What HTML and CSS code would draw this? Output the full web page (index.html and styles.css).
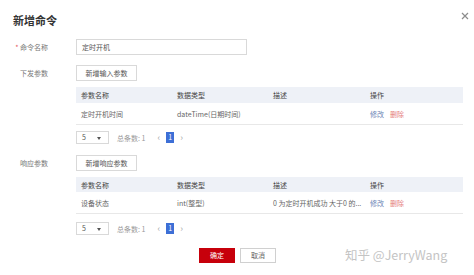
FILE: index.html
```html
<!DOCTYPE html>
<html lang="zh">
<head>
<meta charset="utf-8">
<title>新增命令</title>
<link rel="stylesheet" href="styles.css">
</head>
<body>
<div class="dialog">
  <div class="head">
    <div class="title">新增命令</div>
    <svg class="close" width="8" height="8" viewBox="0 0 8 8"><path d="M1 1L7 7M7 1L1 7" stroke="#8c8c8c" stroke-width="1.2"/></svg>
  </div>

  <div class="row r-name">
    <div class="label"><span class="req">*</span> 命令名称</div>
    <div class="input">定时开机</div>
  </div>

  <div class="row r-btn1">
    <div class="label">下发参数</div>
    <div class="btn">新增输入参数</div>
  </div>
  <div class="block">
    <div class="table">
      <div class="tr th"><div class="c1">参数名称</div><div class="c2">数据类型</div><div class="c3">描述</div><div class="c4">操作</div></div>
      <div class="tr td td1"><div class="c1">定时开机时间</div><div class="c2">dateTime(日期时间)</div><div class="c3"></div><div class="c4"><span class="edit">修改</span><span class="del">删除</span></div></div>
    </div>
    <div class="pager">
      <div class="select">5<span class="arrow"></span></div>
      <span class="total">总条数: 1</span>
      <span class="nav">&lsaquo;</span>
      <span class="page">1</span>
      <span class="nav">&rsaquo;</span>
    </div>
  </div>

  <div class="row r-btn2">
    <div class="label">响应参数</div>
    <div class="btn">新增响应参数</div>
  </div>
  <div class="block">
    <div class="table">
      <div class="tr th th2"><div class="c1">参数名称</div><div class="c2">数据类型</div><div class="c3">描述</div><div class="c4">操作</div></div>
      <div class="tr td td2"><div class="c1">设备状态</div><div class="c2">int(整型)</div><div class="c3">0 为定时开机成功 大于0 的...</div><div class="c4"><span class="edit">修改</span><span class="del">删除</span></div></div>
    </div>
    <div class="pager pager2">
      <div class="select">5<span class="arrow"></span></div>
      <span class="total">总条数: 1</span>
      <span class="nav">&lsaquo;</span>
      <span class="page">1</span>
      <span class="nav">&rsaquo;</span>
    </div>
  </div>

  <div class="footer">
    <div class="ok">确定</div>
    <div class="cancel">取消</div>
  </div>
</div>
<div class="watermark">知乎 @JerryWang</div>
</body>
</html>
```

FILE: styles.css
```css
html, body {
  margin: 0;
  padding: 0;
  background: #fff;
}
body {
  width: 474px;
  height: 275px;
  position: relative;
  overflow: hidden;
  font-family: "Noto Sans CJK SC", "Noto Sans", sans-serif;
  color: #666;
  font-size: 7px;
}
.dialog {
  display: flex;
  flex-direction: column;
}
.head {
  display: flex;
  justify-content: space-between;
  align-items: flex-start;
  padding: 12px 5px 0 13px;
}
.title {
  font-size: 11px;
  line-height: 16px;
  font-weight: bold;
  color: #333;
}
.close {
  margin-top: 0;
}
.row {
  display: flex;
  align-items: center;
}
.label {
  width: 48px;
  margin-right: 28px;
  text-align: right;
  font-size: 7px;
  color: #777;
}
.req {
  color: #e45b5b;
}
.r-name {
  margin-top: 11px;
}
.input {
  box-sizing: border-box;
  width: 171px;
  height: 16px;
  line-height: 14px;
  border: 1px solid #d9d9d9;
  padding-left: 5px;
  color: #555;
}
.r-btn1 {
  margin-top: 10px;
}
.r-btn2 {
  margin-top: 11px;
}
.btn {
  box-sizing: border-box;
  width: 61px;
  height: 16px;
  line-height: 14px;
  border: 1px solid #d9d9d9;
  text-align: center;
  color: #555;
}
.block {
  margin-left: 76px;
  width: 387px;
  margin-top: 6px;
}
.tr {
  display: flex;
  align-items: center;
}
.th {
  height: 16px;
  background: #eef1f7;
  color: #444;
}
.th2 {
  height: 15px;
}
.td {
  height: 21px;
  border-bottom: 1px solid #e8e8e8;
  color: #666;
}
.td2 {
  height: 21px;
}
.c1 { width: 101px; padding-left: 5px; box-sizing: border-box; }
.c2 { width: 96px; }
.c3 { width: 97px; }
.c4 { flex: 1; display: flex; gap: 6px; }
.edit { color: #6a84b4; }
.del { color: #e57c7c; }
.pager {
  display: flex;
  align-items: center;
  margin-top: 6px;
  height: 13px;
}
.pager2 {
  margin-top: 8px;
}
.select {
  box-sizing: border-box;
  width: 33px;
  height: 13px;
  border: 1px solid #d9d9d9;
  padding-left: 5px;
  line-height: 11px;
  color: #555;
  position: relative;
  display: flex;
  align-items: center;
}
.arrow {
  position: absolute;
  right: 7px;
  top: 5px;
  width: 0;
  height: 0;
  border-left: 2px solid transparent;
  border-right: 2px solid transparent;
  border-top: 3px solid #555;
}
.total {
  margin-left: 8px;
  color: #999;
}
.nav {
  color: #aaa;
  font-size: 9px;
  line-height: 11px;
}
.total + .nav {
  margin-left: 12px;
}
.page {
  margin: 0 6px 0 6px;
  width: 8px;
  height: 11px;
  line-height: 11px;
  text-align: center;
  background: #3d6fd6;
  color: #fff;
  font-size: 7px;
}
.footer {
  display: flex;
  justify-content: center;
  gap: 5px;
  margin-top: 13px;
  padding-left: 1px;
}
.ok, .cancel {
  box-sizing: border-box;
  width: 36px;
  height: 15px;
  line-height: 15px;
  text-align: center;
  font-size: 7px;
}
.ok {
  background: #c7000b;
  color: #fff;
}
.cancel {
  border: 1px solid #d0d0d0;
  line-height: 13px;
  color: #666;
}
.watermark {
  position: absolute;
  left: 345px;
  top: 247px;
  font-size: 12.5px;
  line-height: 16px;
  color: #c4c4c4;
  font-family: "Noto Sans CJK SC", "Noto Sans", sans-serif;
  white-space: nowrap;
}
```
